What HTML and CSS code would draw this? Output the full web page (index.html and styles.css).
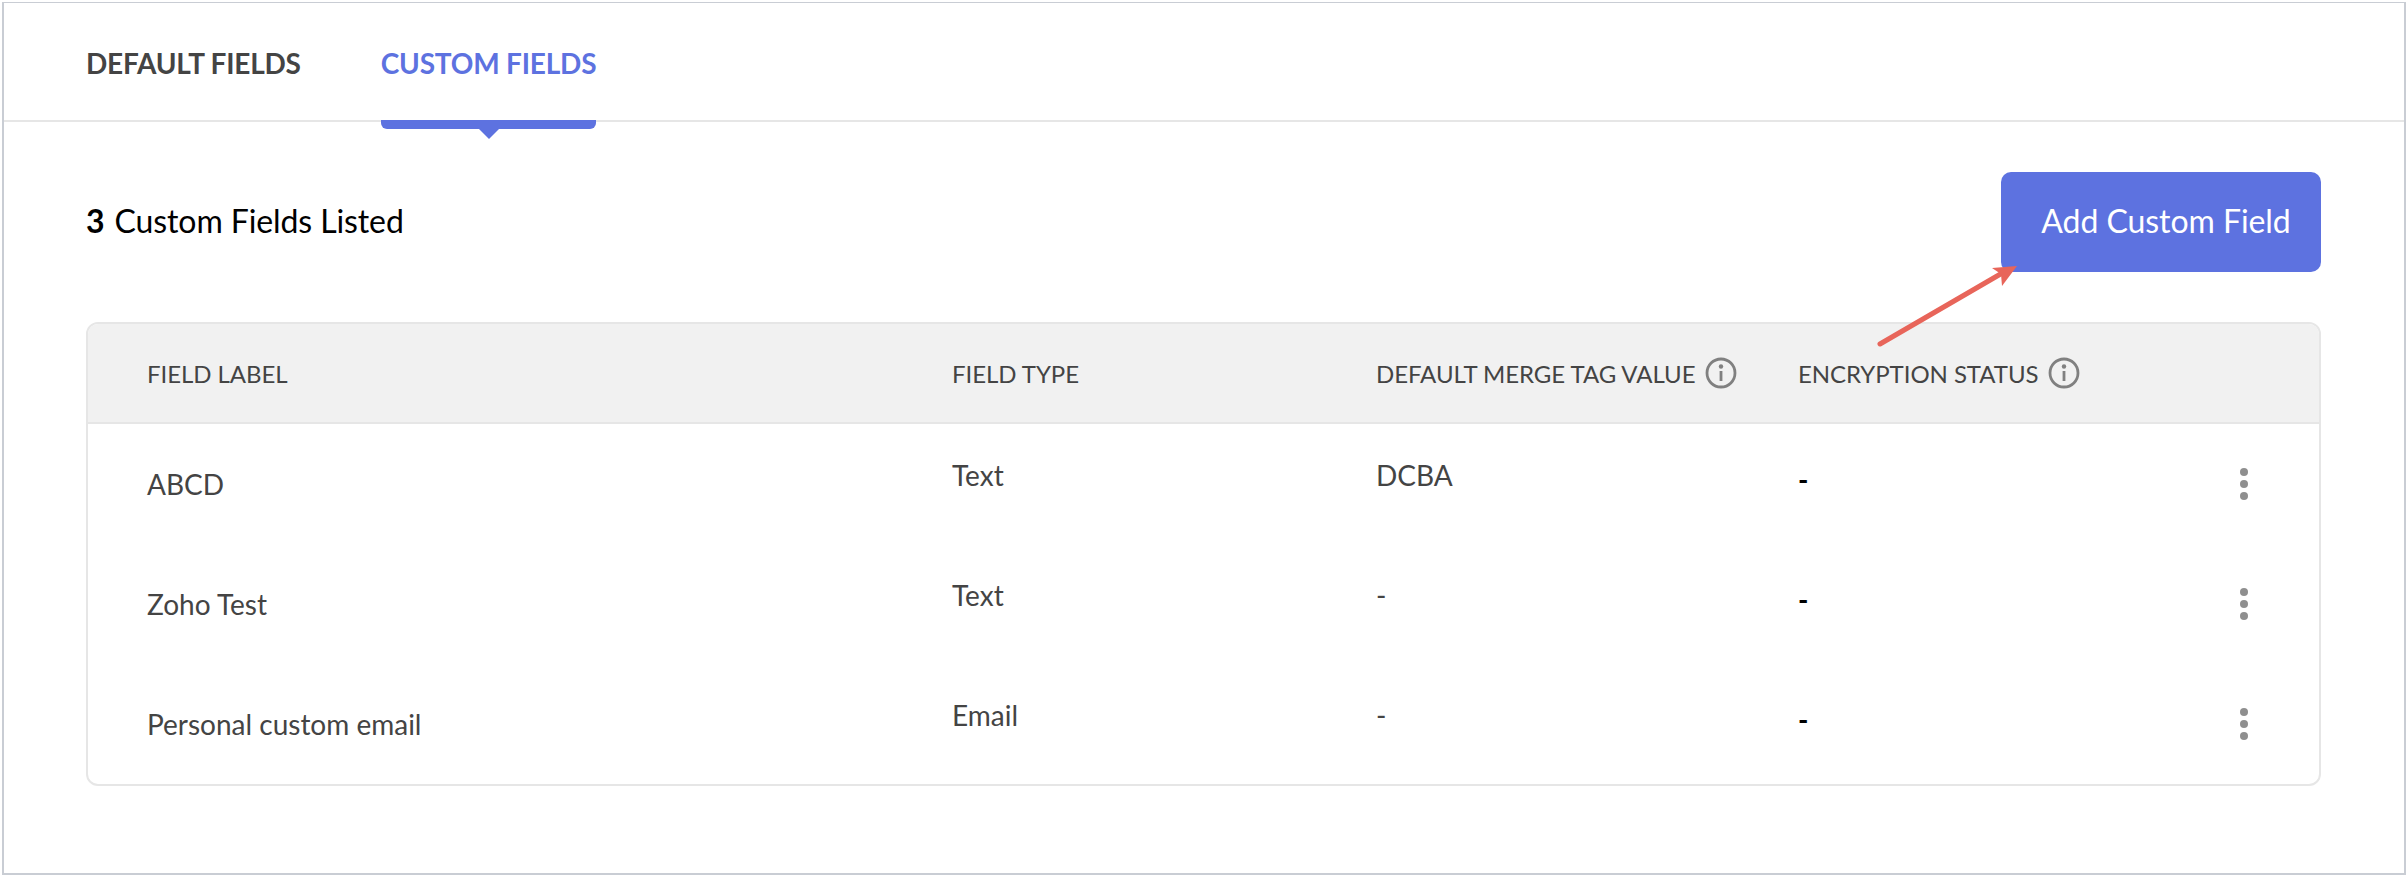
FILE: index.html
```html
<!DOCTYPE html>
<html lang="en">
<head>
  <meta charset="UTF-8" />
  <title>Custom Fields</title>
  <link rel="stylesheet" href="styles.css">
</head>
<body>
  <div class="frame">
    <div class="tabs">
      <a class="tab">DEFAULT FIELDS</a>
      <a class="tab active">CUSTOM FIELDS</a>
    </div>

    <div class="toolbar">
      <p class="count"><b>3</b> Custom Fields Listed</p>
      <button class="add-button">Add Custom Field</button>
    </div>

    <div class="fields-table">
      <div class="row head">
        <div>FIELD LABEL</div>
        <div>FIELD TYPE</div>
        <div class="with-info">DEFAULT MERGE TAG VALUE
          <svg class="info" viewBox="0 0 32 32"><circle cx="16" cy="16" r="14"/><circle class="dot" cx="16" cy="9.5" r="2.2"/><path d="M16 14v10"/></svg>
        </div>
        <div class="with-info">ENCRYPTION STATUS
          <svg class="info" viewBox="0 0 32 32"><circle cx="16" cy="16" r="14"/><circle class="dot" cx="16" cy="9.5" r="2.2"/><path d="M16 14v10"/></svg>
        </div>
      </div>

      <div class="row">
        <div class="label">ABCD</div>
        <div class="cell">Text</div>
        <div class="cell">DCBA</div>
        <div class="status">-</div>
        <div class="more"><i></i><i></i><i></i></div>
      </div>
      <div class="row">
        <div class="label">Zoho Test</div>
        <div class="cell">Text</div>
        <div class="cell">-</div>
        <div class="status">-</div>
        <div class="more"><i></i><i></i><i></i></div>
      </div>
      <div class="row">
        <div class="label">Personal custom email</div>
        <div class="cell">Email</div>
        <div class="cell">-</div>
        <div class="status">-</div>
        <div class="more"><i></i><i></i><i></i></div>
      </div>
    </div>

    <!-- annotation arrow on top of the screenshot -->
    <svg class="arrow" viewBox="0 0 150 100">
      <path class="shaft" d="M4 86 L128 14"/>
      <path class="tip" d="M142 6 L117 8 L126 14 L127 26 Z" transform="translate(-1 2)"/>
    </svg>
  </div>
</body>
</html>
```

FILE: styles.css
```css
* {
  box-sizing: border-box;
}

body {
  margin: 0;
  background: #fff;
  font-family: "Lato", sans-serif;
  color: #444;
}

.frame {
  position: relative;
  width: 2404px;
  height: 873px;
  margin: 2px 0 0 2px;
  border: 2px solid #c9cdd4;
  border-top-width: 1px;
  padding: 0 83px 0 82px;
  background: #fff;
}

.tabs {
  display: flex;
  gap: 80px;
  height: 119px;
  margin: 0 -83px 0 -82px;
  padding: 0 0 0 82px;
  border-bottom: 2px solid #e6e6e6;
}

.tab {
  position: relative;
  padding-top: 43px;
  font-size: 28px;
  font-weight: 700;
  letter-spacing: -0.2px;
  color: #444;
}

.tab.active {
  color: #5d72e0;
}

.tab.active::before {
  content: "";
  position: absolute;
  left: 0;
  right: 0;
  bottom: -9px;
  height: 9px;
  background: #5d72e0;
  border-radius: 0 0 6px 6px;
}

.tab.active::after {
  content: "";
  position: absolute;
  left: 50%;
  bottom: -19px;
  margin-left: -10px;
  border-left: 10px solid transparent;
  border-right: 10px solid transparent;
  border-top: 10px solid #5d72e0;
}

.toolbar {
  display: flex;
  justify-content: space-between;
  align-items: center;
  height: 100px;
  margin-top: 50px;
}

.count {
  margin: 0 0 3px;
  font-size: 32px;
  letter-spacing: -0.1px;
  color: #000;
}

.count b {
  margin-right: 2px;
}

.add-button {
  width: 320px;
  height: 100px;
  padding: 0 0 3px 10px;
  border: none;
  border-radius: 10px;
  background: #5d72e0;
  color: #fff;
  font-family: inherit;
  font-size: 32px;
  letter-spacing: -0.05px;
}

.fields-table {
  margin-top: 50px;
  height: 464px;
  border: 2px solid #e6e6e6;
  border-radius: 12px;
  overflow: hidden;
}

.row {
  display: grid;
  grid-template-columns: 805px 424px 422px 1fr 79px;
  align-items: center;
  height: 120px;
  padding-left: 59px;
  font-size: 28px;
}

.row.head {
  height: 100px;
  grid-template-columns: 805px 424px 422px 1fr;
  background: #f1f1f1;
  border-bottom: 2px solid #e6e6e6;
  font-size: 24px;
  letter-spacing: -0.06px;
}

.with-info {
  display: flex;
  align-items: center;
  gap: 10px;
}

.info {
  width: 32px;
  height: 32px;
  fill: none;
  stroke: #808080;
  stroke-width: 2.8;
}

.info .dot {
  fill: #808080;
  stroke: none;
}

.cell {
  padding-bottom: 19px;
}

.status {
  padding-bottom: 11px;
  color: #000;
  font-weight: 700;
}

.more {
  display: flex;
  flex-direction: column;
  gap: 4px;
  width: 8px;
}

.more i {
  width: 8px;
  height: 8px;
  border-radius: 50%;
  background: #8f8f8f;
}

.arrow {
  position: absolute;
  left: 1872px;
  top: 255px;
  width: 150px;
  height: 100px;
}

.shaft {
  fill: none;
  stroke: #e8655a;
  stroke-width: 5;
  stroke-linecap: round;
}

.tip {
  fill: #e8655a;
}
```
